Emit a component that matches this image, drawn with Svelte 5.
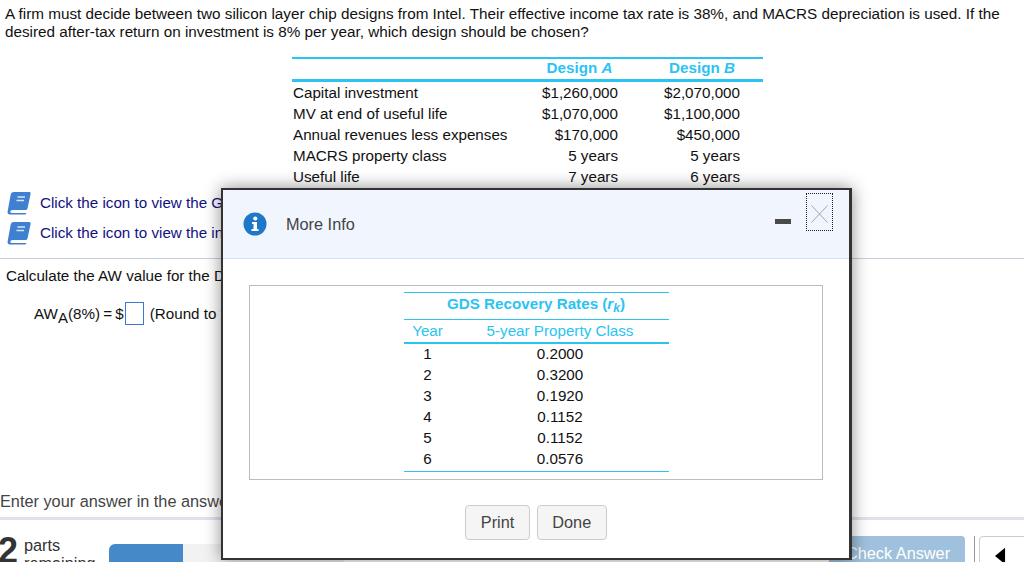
<script>
  const costs = [
    ['Capital investment', '$1,260,000', '$2,070,000'],
    ['MV at end of useful life', '$1,070,000', '$1,100,000'],
    ['Annual revenues less expenses', '$170,000', '$450,000'],
    ['MACRS property class', '5 years', '5 years'],
    ['Useful life', '7 years', '6 years']
  ];
  const rates = ['0.2000', '0.3200', '0.1920', '0.1152', '0.1152', '0.0576'];
</script>

{#snippet book()}
  <svg class="book" viewBox="0 0 24 24" width="24" height="24" aria-hidden="true">
    <path d="M7 1 H22.5 Q24 1 23.6 3 L20.5 17.5 Q20 19 18.5 19 H5.5 Q3.5 19 3.3 20.5 Q3.2 22 5 22 H19.5 Q19 23.5 17.5 23.5 H3 Q0.3 23.5 0.6 20.5 L3.6 4 Q4 1 7 1 Z" fill="#3f80d0"/>
    <path d="M10.5 6 H18 M9.5 9.5 H17" stroke="#d7e6f6" stroke-width="1.5" fill="none"/>
  </svg>
{/snippet}

<div class="page">
  <p class="question">A firm must decide between two silicon layer chip designs from Intel. Their effective income tax rate is 38%, and MACRS depreciation is used. If the desired after-tax return on investment is 8% per year, which design should be chosen?</p>

  <table class="costs">
    <thead>
      <tr><th></th><th>Design <i>A</i></th><th>Design <i>B</i></th></tr>
    </thead>
    <tbody>
      {#each costs as row}
        <tr><td>{row[0]}</td><td class="a">{row[1]}</td><td class="b">{row[2]}</td></tr>
      {/each}
    </tbody>
  </table>

  <div class="links">
    <div class="link">{@render book()}<span>Click the icon to view the GDS Recovery Rates table.</span></div>
    <div class="link">{@render book()}<span>Click the icon to view the interest table.</span></div>
  </div>

  <div class="work">
    <p class="calc">Calculate the AW value for the Design A.</p>
    <div class="answer">
      <span class="formula">AW<sub>A</sub>(8%) = $</span><span class="box"></span><span class="round">(Round to the nearest dollar.)</span>
    </div>
    <p class="enter">Enter your answer in the answer box and then click Check Answer.</p>
  </div>

  <div class="footer">
    <span class="count">2</span>
    <span class="parts">parts<br />remaining</span>
    <span class="progress"><span class="fill"></span></span>
    <span class="check">Check Answer</span>
    <span class="sep"></span>
    <span class="prev"><svg viewBox="0 0 12 18" width="11" height="18"><path d="M11 0 V18 L0 9 Z" fill="#000"/></svg></span>
  </div>

  <div class="modal">
    <div class="head">
      <svg class="info" viewBox="0 0 24 24" width="24" height="24" aria-hidden="true">
        <circle cx="12" cy="12" r="11.5" fill="#1e78c8"/>
        <circle cx="12.3" cy="6.5" r="2.1" fill="#fff"/>
        <path d="M9 10 H14 V17 H15.5 V19 H8.5 V17 H10.5 V12 H9 Z" fill="#fff"/>
      </svg>
      <span class="title">More Info</span>
      <span class="min"></span>
      <span class="close">
        <svg viewBox="0 0 17 18" width="17" height="18"><path d="M0.5 0.5 L16.5 17.5 M16.5 0.5 L0.5 17.5" stroke="#a4a6a8" stroke-width="1" fill="none"/></svg>
      </span>
    </div>
    <div class="body">
      <div class="panel">
        <table class="rates">
          <colgroup><col class="c1" /><col class="c2" /></colgroup>
          <thead>
            <tr><th colspan="2" class="cap">GDS Recovery Rates (<i>r<sub>k</sub></i>)</th></tr>
            <tr class="sub"><th>Year</th><th>5-year Property Class</th></tr>
          </thead>
          <tbody>
            {#each rates as r, i}
              <tr><td>{i + 1}</td><td>{r}</td></tr>
            {/each}
          </tbody>
        </table>
      </div>
      <div class="actions">
        <button>Print</button>
        <button>Done</button>
      </div>
    </div>
  </div>
</div>

<style>
  :global(body) { margin: 0; background: #fff; }
  .page {
    position: relative;
    width: 1024px;
    height: 562px;
    overflow: hidden;
    font-family: "Liberation Sans", Arial, sans-serif;
    font-size: 15.2px;
    color: #111;
    background: #fff;
  }
  p { margin: 0; }
  .question {
    padding: 5px 10px 0 5px;
    font-size: 15.28px;
    line-height: 18px;
    height: 36px;
  }
  table { border-collapse: collapse; }
  .costs {
    margin: 16px 0 0 292px;
    width: 471px;
    table-layout: fixed;
    border-top: 2px solid #2bc3f2;
  }
  .costs th {
    height: 22px;
    padding: 0 0 2px 1px;
    color: #2bc3f2;
    font-weight: bold;
    text-align: center;
    border-bottom: 3px solid #2bc3f2;
    box-sizing: border-box;
  }
  .costs td {
    height: 21px;
    padding: 0;
    line-height: 21px;
    white-space: nowrap;
    box-sizing: border-box;
  }
  .costs th:first-child { width: 226px; }
  .costs th:nth-child(2) { width: 122px; }
  .costs th:nth-child(3) { width: 123px; }
  .costs td:first-child { padding-left: 1px; }
  .costs td.a { text-align: right; padding-right: 22px; }
  .costs td.b { text-align: right; padding-right: 23px; }
  .links { padding: 1px 0 0 7px; }
  .link {
    display: flex;
    align-items: center;
    gap: 9px;
    height: 30px;
    color: #12127f;
    white-space: nowrap;
  }
  .book { flex: none; }
  .work {
    display: flex;
    flex-direction: column;
    margin-top: 10px;
    border-top: 1px solid #c8cfdc;
    border-bottom: 3px solid #dfe2ec;
    padding-left: 6px;
    height: 258px;
  }
  .calc { padding-top: 8px; line-height: 18px; }
  .answer {
    display: flex;
    align-items: center;
    margin: 16px 0 0 28px;
    white-space: nowrap;
    height: 26px;
  }
  .formula { word-spacing: -1px; }
  .answer sub { font-size: 15px; vertical-align: -4px; line-height: 0; }
  .box {
    width: 19px;
    height: 23px;
    box-sizing: border-box;
    border: 1px solid #3f76cf;
    margin: 0 6px 0 1px;
    flex: none;
  }
  .enter {
    margin: auto 0 7px -6px;
    line-height: 18px;
    white-space: nowrap;
    color: #444;
    font-size: 16.3px;
  }
  .footer {
    display: flex;
    align-items: flex-start;
    white-space: nowrap;
    height: 60px;
  }
  .count {
    flex: none;
    width: 26px;
    margin: 16px 0 0 -2px;
    font-size: 36px;
    font-weight: bold;
    line-height: 30px;
    color: #333;
  }
  .parts {
    flex: none;
    width: 85px;
    margin-top: 16px;
    line-height: 18px;
    color: #333;
    font-size: 16.3px;
  }
  .progress {
    flex: none;
    display: block;
    width: 235px;
    height: 30px;
    margin-top: 24px;
    background: #f2f2f2;
    border-radius: 6px 0 0 0;
  }
  .fill {
    display: block;
    width: 74px;
    height: 30px;
    background: #4589c8;
    border-radius: 6px 0 0 0;
  }
  .check {
    flex: none;
    width: 136px;
    height: 40px;
    margin: 16px 0 0 485px;
    box-sizing: border-box;
    padding: 8px 0 0 17px;
    background: #a0c1dd;
    color: #fff;
    font-size: 16.3px;
    border-radius: 4px;
  }
  .sep {
    flex: none;
    width: 1px;
    height: 40px;
    margin: 16px 0 0 9px;
    background: #999;
  }
  .prev {
    flex: none;
    width: 60px;
    height: 40px;
    margin: 16px 0 0 4px;
    box-sizing: border-box;
    border: 1px solid #ccc;
    border-radius: 4px 0 0 4px;
    padding: 10px 0 0 15px;
  }
  .prev svg { display: block; }
  .modal {
    position: absolute;
    left: 221px;
    top: 188px;
    width: 631px;
    height: 372px;
    box-sizing: border-box;
    border: 2px solid #333;
    border-right-width: 3px;
    background: #fff;
    box-shadow: 0 0 16px rgba(0, 0, 0, 0.45);
  }
  .head {
    display: flex;
    align-items: center;
    height: 69px;
    box-sizing: border-box;
    padding: 0 16px 0 20px;
    background: #f0f5fe;
    border-bottom: 1px solid #cde3f7;
  }
  .info { flex: none; }
  .title { margin-left: 19px; color: #444; font-size: 16.3px; }
  .min {
    align-self: flex-start;
    width: 16px;
    height: 5px;
    margin: 29px 0 0 auto;
    background: #4a4a4a;
  }
  .close {
    align-self: flex-start;
    display: flex;
    align-items: center;
    justify-content: center;
    width: 27px;
    height: 38px;
    box-sizing: border-box;
    margin: 3px 0 0 15px;
    padding-top: 4px;
    border: 1px dotted #222;
  }
  .body { padding: 26px 26px 0 26px; }
  .panel {
    height: 195px;
    box-sizing: border-box;
    border: 1px solid #bcbcbc;
    padding-top: 6px;
    display: flex;
    justify-content: center;
    align-items: flex-start;
  }
  .rates {
    width: 265px;
    table-layout: fixed;
    border-top: 1px solid #2bc3f2;
  }
  .c1 { width: 48px; }
  .c2 { width: 217px; }
  .rates th { color: #2bc3f2; padding: 0; white-space: nowrap; box-sizing: border-box; }
  .rates .cap { height: 27px; padding-bottom: 6px; font-weight: bold; border-bottom: 1px solid #2bc3f2; }
  .rates sub { font-size: 12px; line-height: 0; vertical-align: -3px; }
  .rates .sub th { font-weight: normal; height: 23px; border-bottom: 2px solid #2bc3f2; }
  .rates td { height: 21px; padding: 0; text-align: center; box-sizing: border-box; }
  .rates tbody tr:last-child td { height: 24px; padding-bottom: 1px; border-bottom: 1px solid #2bc3f2; }
  .actions {
    display: flex;
    justify-content: center;
    gap: 7px;
    margin-top: 25px;
  }
  button {
    height: 35px;
    padding: 0 14.5px;
    font: 16.3px "Liberation Sans", Arial, sans-serif;
    color: #444;
    background: #f5f5f5;
    border: 1px solid #ccc;
    border-radius: 4px;
  }
</style>
